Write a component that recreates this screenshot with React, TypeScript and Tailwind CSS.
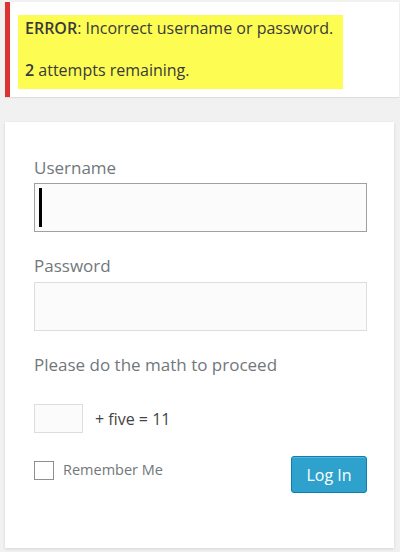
import React from "react";

function App() {
    return (
        <div
            className="min-h-[552px] w-[400px] bg-[#f1f1f1] pt-[2px]"
            style={{ fontFamily: '"Open Sans", "Noto Sans", sans-serif' }}
        >
            {/* error notice */}
            <div className="ml-[5px] mr-[1px] h-[95px] border-l-[5px] border-[#dc3232] bg-white pl-[8px] pt-[13px] shadow-[0_1px_1px_rgba(0,0,0,0.08)]">
                <div className="w-[325px] bg-[#fcfc52] pl-[7px] pt-[3px] pb-[8px] text-[16px] leading-[21px] text-[#3a3a3a]">
                    <p>
                        <strong className="font-semibold">ERROR</strong>: Incorrect username or password.
                    </p>
                    <p>&nbsp;</p>
                    <p>
                        <strong className="font-semibold">2</strong> attempts remaining.
                    </p>
                </div>
            </div>

            {/* login form */}
            <div className="ml-[5px] mt-[25px] h-[426px] w-[389px] bg-white pl-[29px] pr-[27px] pt-[34px] shadow-[0_1px_3px_rgba(0,0,0,0.13)]">
                <label className="mb-[3px] block text-[17px] leading-[24px] text-[#72777c]">Username</label>
                <div className="flex h-[49px] items-center border border-[#a0a0a0] bg-[#fbfbfb] pl-[4px]">
                    <div className="h-[39px] w-[3px] bg-black" />
                </div>

                <label className="mb-[4px] mt-[22px] block text-[17px] leading-[24px] text-[#72777c]">Password</label>
                <div className="h-[49px] border border-[#dddddd] bg-[#fbfbfb]" />

                <p className="mt-[22px] text-[17px] leading-[24px] text-[#72777c]">Please do the math to proceed</p>

                <div className="mt-[27px] flex items-center gap-[12px]">
                    <div className="h-[29px] w-[49px] border border-[#dddddd] bg-[#fbfbfb]" />
                    <span className="text-[16px] leading-[24px] text-[#444]">+ five = 11</span>
                </div>

                <div className="mt-[23px] flex items-start justify-between">
                    <div className="mt-[4px] flex items-center gap-[9px]">
                        <div className="h-[19px] w-[20px] border border-[#8f8f8f] bg-white" />
                        <span className="text-[14.5px] leading-[20px] text-[#72777c]">Remember Me</span>
                    </div>
                    <button className="h-[37px] w-[76px] rounded-[3px] border border-[#0b7fae] bg-[#2ea2cc] text-[16px] text-white shadow-[inset_0_1px_0_rgba(120,200,230,0.5)]">
                        Log In
                    </button>
                </div>
            </div>
        </div>
    );
}

export default App;
